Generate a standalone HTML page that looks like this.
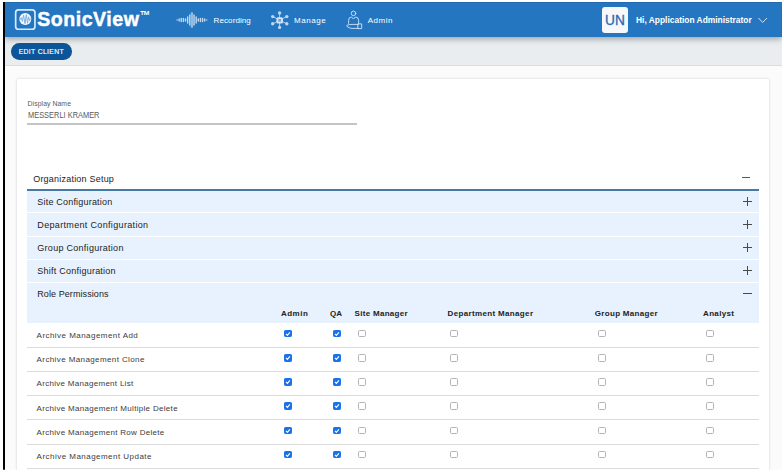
<!DOCTYPE html>
<html><head><meta charset="utf-8"><title>SonicView</title>
<style>
html,body{margin:0;padding:0;background:#fff;}
body{width:784px;height:472px;position:relative;overflow:hidden;font-family:'Liberation Sans',sans-serif;}
.frame{position:absolute;left:3px;top:2px;width:779px;height:468px;background:#fbfbfb;overflow:hidden;}
.abs{position:absolute;}
.black{position:absolute;left:3px;top:2px;width:2.2px;height:468px;background:#000;}
.hdr{position:absolute;left:5px;top:2px;width:777px;height:34.6px;box-sizing:border-box;border-top:1.6px solid #236aae;border-right:1.2px solid #2470b8;background:#2576c0;box-shadow:0 1.5px 6px rgba(0,0,0,.33);}
.tool{position:absolute;left:5px;top:36.6px;width:777px;height:28.4px;background:#e9edf0;border-bottom:1.7px solid #dbdcdd;}
.btn{position:absolute;left:11px;top:43px;width:61px;height:16.5px;border-radius:8.3px;background:#0d5599;}
.card{position:absolute;left:17.3px;top:79px;width:752px;height:400px;background:#fff;box-shadow:0 0 2.5px rgba(0,0,0,.2);border-radius:1px;}
.t{position:absolute;white-space:nowrap;}
.uline{position:absolute;left:27.3px;top:123.35px;width:330px;height:1.4px;background:#c4c4c4;}
.bline{position:absolute;left:27px;top:188.85px;width:732px;height:1.8px;background:#4879a4;z-index:2;}
.acc{position:absolute;left:27px;width:732px;background:#e8f2fe;}
.ph{position:absolute;left:743.1px;width:8.6px;height:0.95px;background:#4a4a4a;}
.pv{position:absolute;left:746.93px;width:0.95px;height:8.6px;background:#4a4a4a;}
.sep{position:absolute;left:27px;width:732px;height:1px;background:#dcdcdc;}
.cb{position:absolute;width:5.9px;height:5.7px;border:0.9px solid #b4b4b4;border-radius:1.6px;background:#fff;}
.cb.on{background:#1a72e8;border-color:#1a72e8;border-radius:1.3px;}
.cb svg{position:absolute;left:0;top:0;width:100%;height:100%;}
.un{position:absolute;left:602px;top:6.8px;width:26.4px;height:26px;border-radius:3px;background:#f7f8fc;}
.clip{position:absolute;left:0;top:0;width:784px;height:472px;clip-path:inset(2px 2.1px 2.2px 2.9px);}
</style></head><body>
<div class="clip">
<div class="frame"></div>
<div class="tool"></div>
<div class="hdr"></div>
<div class="black"></div>
<div class="btn"></div>
<div class="card"></div>
<div class="un"></div>
<svg class="abs" style="left:0;top:0" width="784" height="40" viewBox="0 0 784 40">
<rect x="15.65" y="9.95" width="19.3" height="19.3" rx="2.8" fill="none" stroke="#d6eafa" stroke-width="1.7"/>
<circle cx="25.3" cy="19.0" r="6" fill="#f4f9fe"/>
<path d="M20.2 19.6 L21.3 17.6 L22.4 21.4 L23.6 15.2 L25.0 23.6 L26.3 14.6 L27.5 23.2 L28.6 16.8 L29.6 20.6 L30.4 18.6" fill="none" stroke="#74aadf" stroke-width="0.9" stroke-linejoin="round"/>
<rect x="176.30" y="19.25" width="1.4" height="1.5" rx="0.7" fill="#dcebf9" opacity="0.85"/><rect x="178.43" y="18.25" width="1.4" height="3.5" rx="0.7" fill="#dcebf9" opacity="0.85"/><rect x="180.56" y="17.75" width="1.4" height="4.5" rx="0.7" fill="#dcebf9" opacity="0.85"/><rect x="182.69" y="17.75" width="1.4" height="4.5" rx="0.7" fill="#dcebf9" opacity="0.85"/><rect x="184.82" y="18.25" width="1.4" height="3.5" rx="0.7" fill="#dcebf9" opacity="0.85"/><rect x="186.95" y="16.25" width="1.4" height="7.5" rx="0.7" fill="#dcebf9" opacity="0.85"/><rect x="189.08" y="14.25" width="1.4" height="11.5" rx="0.7" fill="#dcebf9" opacity="0.85"/><rect x="190.81" y="12.15" width="2.2" height="15.7" rx="0.7" fill="#dcebf9" opacity="0.6"/><rect x="193.34" y="14.25" width="1.4" height="11.5" rx="0.7" fill="#dcebf9" opacity="0.85"/><rect x="195.47" y="16.25" width="1.4" height="7.5" rx="0.7" fill="#dcebf9" opacity="0.85"/><rect x="197.60" y="18.25" width="1.4" height="3.5" rx="0.7" fill="#dcebf9" opacity="0.85"/><rect x="199.73" y="17.75" width="1.4" height="4.5" rx="0.7" fill="#dcebf9" opacity="0.85"/><rect x="201.86" y="17.75" width="1.4" height="4.5" rx="0.7" fill="#dcebf9" opacity="0.85"/><rect x="203.99" y="18.25" width="1.4" height="3.5" rx="0.7" fill="#dcebf9" opacity="0.85"/><rect x="206.12" y="19.25" width="1.4" height="1.5" rx="0.7" fill="#dcebf9" opacity="0.85"/>
<!-- manage icon -->
<g stroke="#bfd9f2" stroke-width="0.9" fill="none">
<line x1="279.6" y1="20.2" x2="279.6" y2="13"/><line x1="279.6" y1="20.2" x2="279.6" y2="27.4"/>
<line x1="279.6" y1="20.2" x2="273" y2="16.6"/><line x1="279.6" y1="20.2" x2="286.6" y2="16.6"/>
<line x1="279.6" y1="20.2" x2="273" y2="23.8"/><line x1="279.6" y1="20.2" x2="286.6" y2="23.8"/>
</g>
<g fill="#bcd7f2">
<circle cx="279.6" cy="12.9" r="1.7"/><circle cx="279.6" cy="27.4" r="1.6"/>
<circle cx="272.7" cy="16.6" r="1.7"/><circle cx="286.8" cy="16.6" r="1.7"/>
<circle cx="272.7" cy="23.8" r="1.7"/><circle cx="286.8" cy="23.8" r="1.7"/>
</g>
<rect x="276.4" y="17.2" width="6.6" height="6.4" rx="1.6" fill="#cfe3f6"/>
<rect x="278.2" y="19" width="2.8" height="2.6" fill="#6fa6dc"/>
<!-- admin icon -->
<g stroke="#d4e6f7" stroke-width="0.9" fill="none" stroke-linejoin="round" stroke-linecap="round">
<ellipse cx="353.5" cy="13.4" rx="2.25" ry="2.3"/>
<path d="M348.6 23.4 V20.4 Q348.6 17 351.6 17 L353.5 19 L355.4 17 Q358.6 17 358.6 20.4 V23.4"/>
<path d="M358.2 24.4 H352 Q350 24.4 347.2 25.2 Q346.2 25.6 347 26.4 Q349.4 28.4 352 28.4 H358.2"/>
<rect x="358.2" y="23.9" width="3.5" height="4.7"/>
</g>
<!-- chevron -->
<path d="M758.4 18 L762.7 22.4 L767 18" fill="none" stroke="#e8f2fb" stroke-width="0.9"/>
</svg>
<div class="uline"></div>
<div class="bline"></div>
<div class="ph" style="top:177.4px;left:741.8px;height:1.1px;background:#5a5a5a"></div>
<div class="acc" style="top:190.40px;height:22.1px"></div><div class="ph" style="top:200.83px"></div><div class="pv" style="top:197.00px"></div><div class="acc" style="top:213.46px;height:22.1px"></div><div class="ph" style="top:223.89px"></div><div class="pv" style="top:220.06px"></div><div class="acc" style="top:236.52px;height:22.1px"></div><div class="ph" style="top:246.95px"></div><div class="pv" style="top:243.12px"></div><div class="acc" style="top:259.58px;height:22.1px"></div><div class="ph" style="top:270.01px"></div><div class="pv" style="top:266.18px"></div><div class="acc" style="top:282.64px;height:40.76px"></div><div class="ph" style="top:293.39px"></div>
<div class="sep" style="top:346.80px"></div><div class="cb on" style="left:284px;top:329.80px"><svg viewBox="0 0 10 10"><path d="M1.6 5.2 L4.0 7.6 L8.4 2.4" fill="none" stroke="#fff" stroke-width="2"/></svg></div><div class="cb on" style="left:333.4px;top:329.80px"><svg viewBox="0 0 10 10"><path d="M1.6 5.2 L4.0 7.6 L8.4 2.4" fill="none" stroke="#fff" stroke-width="2"/></svg></div><div class="cb" style="left:358px;top:329.80px"></div><div class="cb" style="left:450.3px;top:329.80px"></div><div class="cb" style="left:598px;top:329.80px"></div><div class="cb" style="left:706px;top:329.80px"></div><div class="sep" style="top:371.00px"></div><div class="cb on" style="left:284px;top:354.00px"><svg viewBox="0 0 10 10"><path d="M1.6 5.2 L4.0 7.6 L8.4 2.4" fill="none" stroke="#fff" stroke-width="2"/></svg></div><div class="cb on" style="left:333.4px;top:354.00px"><svg viewBox="0 0 10 10"><path d="M1.6 5.2 L4.0 7.6 L8.4 2.4" fill="none" stroke="#fff" stroke-width="2"/></svg></div><div class="cb" style="left:358px;top:354.00px"></div><div class="cb" style="left:450.3px;top:354.00px"></div><div class="cb" style="left:598px;top:354.00px"></div><div class="cb" style="left:706px;top:354.00px"></div><div class="sep" style="top:395.20px"></div><div class="cb on" style="left:284px;top:378.20px"><svg viewBox="0 0 10 10"><path d="M1.6 5.2 L4.0 7.6 L8.4 2.4" fill="none" stroke="#fff" stroke-width="2"/></svg></div><div class="cb on" style="left:333.4px;top:378.20px"><svg viewBox="0 0 10 10"><path d="M1.6 5.2 L4.0 7.6 L8.4 2.4" fill="none" stroke="#fff" stroke-width="2"/></svg></div><div class="cb" style="left:358px;top:378.20px"></div><div class="cb" style="left:450.3px;top:378.20px"></div><div class="cb" style="left:598px;top:378.20px"></div><div class="cb" style="left:706px;top:378.20px"></div><div class="sep" style="top:419.40px"></div><div class="cb on" style="left:284px;top:402.40px"><svg viewBox="0 0 10 10"><path d="M1.6 5.2 L4.0 7.6 L8.4 2.4" fill="none" stroke="#fff" stroke-width="2"/></svg></div><div class="cb on" style="left:333.4px;top:402.40px"><svg viewBox="0 0 10 10"><path d="M1.6 5.2 L4.0 7.6 L8.4 2.4" fill="none" stroke="#fff" stroke-width="2"/></svg></div><div class="cb" style="left:358px;top:402.40px"></div><div class="cb" style="left:450.3px;top:402.40px"></div><div class="cb" style="left:598px;top:402.40px"></div><div class="cb" style="left:706px;top:402.40px"></div><div class="sep" style="top:443.60px"></div><div class="cb on" style="left:284px;top:426.60px"><svg viewBox="0 0 10 10"><path d="M1.6 5.2 L4.0 7.6 L8.4 2.4" fill="none" stroke="#fff" stroke-width="2"/></svg></div><div class="cb on" style="left:333.4px;top:426.60px"><svg viewBox="0 0 10 10"><path d="M1.6 5.2 L4.0 7.6 L8.4 2.4" fill="none" stroke="#fff" stroke-width="2"/></svg></div><div class="cb" style="left:358px;top:426.60px"></div><div class="cb" style="left:450.3px;top:426.60px"></div><div class="cb" style="left:598px;top:426.60px"></div><div class="cb" style="left:706px;top:426.60px"></div><div class="sep" style="top:467.80px"></div><div class="cb on" style="left:284px;top:450.80px"><svg viewBox="0 0 10 10"><path d="M1.6 5.2 L4.0 7.6 L8.4 2.4" fill="none" stroke="#fff" stroke-width="2"/></svg></div><div class="cb on" style="left:333.4px;top:450.80px"><svg viewBox="0 0 10 10"><path d="M1.6 5.2 L4.0 7.6 L8.4 2.4" fill="none" stroke="#fff" stroke-width="2"/></svg></div><div class="cb" style="left:358px;top:450.80px"></div><div class="cb" style="left:450.3px;top:450.80px"></div><div class="cb" style="left:598px;top:450.80px"></div><div class="cb" style="left:706px;top:450.80px"></div>
<span class="t" style="-webkit-text-stroke:0.45px #fff;left:37.2px;top:-0.24px;font-size:19.6px;line-height:39.2px;font-weight:700;color:#ffffff;letter-spacing:0.518px">SonicView</span>
<span class="t" style="transform:scaleX(0.8);transform-origin:0 0;left:140.4px;top:3.08px;font-size:13px;line-height:26px;font-weight:700;color:#ffffff;letter-spacing:0.000px">™</span>
<span class="t" style="left:213.6px;top:12.61px;font-size:8px;line-height:16px;font-weight:400;color:#ffffff;letter-spacing:0.091px">Recording</span>
<span class="t" style="left:293.9px;top:12.61px;font-size:8px;line-height:16px;font-weight:400;color:#ffffff;letter-spacing:0.576px">Manage</span>
<span class="t" style="left:367.7px;top:12.61px;font-size:8px;line-height:16px;font-weight:400;color:#ffffff;letter-spacing:0.528px">Admin</span>
<span class="t" style="-webkit-text-stroke:0.3px #2a6ab0;transform:scaleX(0.9785);transform-origin:0 50%;left:605.0px;top:6.49px;font-size:14px;line-height:28px;font-weight:400;color:#2a6ab0;letter-spacing:0.000px">UN</span>
<span class="t" style="left:636.0px;top:11.81px;font-size:8.4px;line-height:16.8px;font-weight:700;color:#ffffff;letter-spacing:0.016px">Hi, Application Administrator</span>
<span class="t" style="-webkit-text-stroke:0.15px #fff;left:18.7px;top:44.79px;font-size:6.8px;line-height:13.6px;font-weight:400;color:#ffffff;letter-spacing:0.348px">EDIT CLIENT</span>
<span class="t" style="left:27.6px;top:97.19px;font-size:6.9px;line-height:13.8px;font-weight:400;color:#5c5c5c;letter-spacing:0.046px">Display Name</span>
<span class="t" style="transform:scaleX(0.8654);transform-origin:0 50%;left:27.6px;top:107.12px;font-size:8.6px;line-height:17.2px;font-weight:400;color:#5a5a5a;letter-spacing:0.000px">MESSERLI KRAMER</span>
<span class="t" style="left:33.2px;top:169.82px;font-size:9px;line-height:18px;font-weight:400;color:#222222;letter-spacing:0.214px">Organization Setup</span>
<span class="t" style="left:37.3px;top:193.02px;font-size:9px;line-height:18px;font-weight:400;color:#222222;letter-spacing:0.197px">Site Configuration</span>
<span class="t" style="left:37.3px;top:216.12px;font-size:9px;line-height:18px;font-weight:400;color:#222222;letter-spacing:0.336px">Department Configuration</span>
<span class="t" style="left:37.3px;top:239.12px;font-size:9px;line-height:18px;font-weight:400;color:#222222;letter-spacing:0.280px">Group Configuration</span>
<span class="t" style="left:37.3px;top:262.22px;font-size:9px;line-height:18px;font-weight:400;color:#222222;letter-spacing:0.236px">Shift Configuration</span>
<span class="t" style="left:37.3px;top:285.22px;font-size:9px;line-height:18px;font-weight:400;color:#222222;letter-spacing:0.078px">Role Permissions</span>
<span class="t" style="left:281.0px;top:306.11px;font-size:8.0px;line-height:16.0px;font-weight:700;color:#222222;letter-spacing:0.477px">Admin</span>
<span class="t" style="left:330.0px;top:306.11px;font-size:8.0px;line-height:16.0px;font-weight:700;color:#222222;letter-spacing:0.000px">QA</span>
<span class="t" style="left:354.5px;top:306.11px;font-size:8.0px;line-height:16.0px;font-weight:700;color:#222222;letter-spacing:0.309px">Site Manager</span>
<span class="t" style="left:447.5px;top:306.11px;font-size:8.0px;line-height:16.0px;font-weight:700;color:#222222;letter-spacing:0.348px">Department Manager</span>
<span class="t" style="left:594.8px;top:306.11px;font-size:8.0px;line-height:16.0px;font-weight:700;color:#222222;letter-spacing:0.306px">Group Manager</span>
<span class="t" style="left:703.0px;top:306.11px;font-size:8.0px;line-height:16.0px;font-weight:700;color:#222222;letter-spacing:0.349px">Analyst</span>
<span class="t" style="left:36.6px;top:327.51px;font-size:8px;line-height:16px;font-weight:400;color:#3c3c3c;letter-spacing:0.457px">Archive Management Add</span>
<span class="t" style="left:36.6px;top:351.87px;font-size:8px;line-height:16px;font-weight:400;color:#3c3c3c;letter-spacing:0.395px">Archive Management Clone</span>
<span class="t" style="left:36.6px;top:376.23px;font-size:8px;line-height:16px;font-weight:400;color:#3c3c3c;letter-spacing:0.288px">Archive Management List</span>
<span class="t" style="left:36.6px;top:400.59px;font-size:8px;line-height:16px;font-weight:400;color:#3c3c3c;letter-spacing:0.311px">Archive Management Multiple Delete</span>
<span class="t" style="left:36.6px;top:424.95px;font-size:8px;line-height:16px;font-weight:400;color:#3c3c3c;letter-spacing:0.305px">Archive Management Row Delete</span>
<span class="t" style="left:36.6px;top:449.31px;font-size:8px;line-height:16px;font-weight:400;color:#3c3c3c;letter-spacing:0.470px">Archive Management Update</span>
</div>
</body></html>
